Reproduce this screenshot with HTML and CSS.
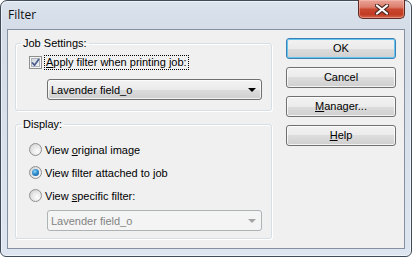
FILE: index.html
```html
<!DOCTYPE html>
<html>
<head>
<meta charset="utf-8">
<link rel="stylesheet" href="styles.css">
</head>
<body>
<div class="window">
  <div class="titlebar">
    <span class="title">Filter</span>
    <div class="close">
      <svg width="14" height="11" viewBox="0 0 14 11">
        <path d="M2 1.5 L12 9.5 M12 1.5 L2 9.5" stroke="#4a2a24" stroke-width="4.2" stroke-linecap="round" fill="none"/>
        <path d="M2 1.5 L12 9.5 M12 1.5 L2 9.5" stroke="#ffffff" stroke-width="2.2" stroke-linecap="round" fill="none"/>
      </svg>
    </div>
  </div>
  <div class="client">
    <div class="groups">
      <fieldset class="group job">
        <legend>Job Settings:</legend>
        <div class="check-row">
          <span class="checkbox">
            <svg width="9" height="9" viewBox="0 0 9 9"><path d="M1 4.5 L3.5 7.2 L8 1" stroke="#4b5f8f" stroke-width="1.8" fill="none"/></svg>
          </span>
          <span class="focus"><u>A</u>pply filter when printing job:</span>
        </div>
        <div class="combo">
          <span class="combo-text">Lavender field_o</span>
          <span class="arrow"></span>
        </div>
      </fieldset>
      <fieldset class="group display">
        <legend>Display:</legend>
        <div class="radio-row"><span class="radio"></span><span>View <u>o</u>riginal image</span></div>
        <div class="radio-row"><span class="radio checked"></span><span>View filter attached to <u>j</u>ob</span></div>
        <div class="radio-row"><span class="radio"></span><span>View <u>s</u>pecific filter:</span></div>
        <div class="combo disabled">
          <span class="combo-text">Lavender field_o</span>
          <span class="arrow"></span>
        </div>
      </fieldset>
    </div>
    <div class="buttons">
      <div class="btn default">OK</div>
      <div class="btn">Cancel</div>
      <div class="btn"><u>M</u>anager...</div>
      <div class="btn"><u>H</u>elp</div>
    </div>
  </div>
</div>
</body>
</html>
```
FILE: styles.css
```css
* { box-sizing: border-box; }
html, body { margin: 0; padding: 0; }
body {
  width: 412px;
  height: 257px;
  overflow: hidden;
  background: #ffffff;
  font-family: "Liberation Sans", Arial, sans-serif;
  font-size: 11px;
  color: #000;
}
.window {
  width: 412px;
  height: 257px;
  border: 1px solid #3f4b59;
  border-radius: 7px 7px 6px 6px;
  background: linear-gradient(180deg, #dbe3ed 0%, #d3dce7 12%, #d8e1ec 60%, #dde6f0 100%);
  box-shadow: inset 0 0 0 1px rgba(255,255,255,0.55);
  display: flex;
  flex-direction: column;
  padding: 0 6px 7px 6px;
}
.titlebar {
  height: 28px;
  display: flex;
  justify-content: space-between;
  align-items: flex-start;
  flex: none;
}
.title {
  font-family: "Open Sans", "Noto Sans", sans-serif;
  font-size: 12px;
  line-height: 16px;
  padding: 6px 0 0 1px;
  color: #111;
}
.close {
  width: 47px;
  height: 19px;
  margin-top: -1px;
  border: 1px solid #5e2a22;
  border-top: none;
  border-radius: 0 0 5px 5px;
  background: linear-gradient(180deg, #e9a699 0%, #dc7d6c 40%, #c9472f 52%, #c23a22 80%, #d2654c 100%);
  box-shadow: inset 0 0 0 1px rgba(255,200,190,0.45);
  display: flex;
  align-items: center;
  justify-content: center;
  padding-top: 1px;
}
.client {
  flex: 1;
  border: 1px solid #8591a0;
  background: #f0f0f0;
  display: flex;
  padding: 7px 8px 0 7px;
  gap: 14px;
}
.groups {
  width: 257px;
  display: flex;
  flex-direction: column;
  gap: 7px;
}
.group {
  margin: 0;
  min-width: 0;
  border: 1px solid #d5dfe5;
  border-radius: 3px;
  box-shadow: 1px 1px 0 #ffffff, inset 1px 1px 0 #ffffff;
}
.group legend {
  padding: 0 2px;
  margin-left: -8px;
  line-height: 13px;
  height: 13px;
}
.job { padding: 5px 9px 10px 13px; }
.display { padding: 11px 9px 7px 13px; }
.check-row {
  display: flex;
  align-items: center;
  height: 15px;
}
.checkbox {
  width: 13px;
  height: 13px;
  border: 1px solid #8f8f8f;
  background: #f4f4f4;
  display: flex;
  align-items: center;
  justify-content: center;
  flex: none;
  box-shadow: inset 0 0 0 1px #f4f4f4, inset 0 0 0 2px #aeb3b9;
  background-image: linear-gradient(135deg, #c9ced6 0%, #e8eaed 60%, #f6f6f6 100%);
}
.focus {
  margin-left: 2px;
  padding: 0 2px 0 2px;
  outline: 1px dotted #000;
  outline-offset: -1px;
  line-height: 15px;
  height: 15px;
}
.combo {
  margin: 9px 0 0 18px;
  width: 215px;
  height: 21px;
  border: 1px solid #707070;
  border-radius: 3px;
  background: linear-gradient(180deg, #f2f2f2 0%, #ebebeb 50%, #dddddd 50%, #cfcfcf 100%);
  box-shadow: inset 0 0 0 1px rgba(255,255,255,0.7);
  display: flex;
  align-items: center;
  justify-content: space-between;
  padding: 0 5px 0 3px;
}
.arrow {
  width: 0;
  height: 0;
  border-left: 4px solid transparent;
  border-right: 4px solid transparent;
  border-top: 4px solid #000;
  margin-top: 1px;
}
.combo.disabled {
  margin-top: 7px;
  border-color: #adb2b5;
  background: #f4f4f4;
  box-shadow: none;
  color: #838383;
}
.combo.disabled .arrow { border-top-color: #a3a3a3; }
.radio-row {
  display: flex;
  align-items: center;
  height: 15px;
  gap: 3px;
  margin-bottom: 8px;
}
.radio-row:nth-of-type(3) { margin-bottom: 0; }
.radio {
  width: 13px;
  height: 13px;
  border-radius: 50%;
  border: 1px solid #8f8f8f;
  background: radial-gradient(circle at 65% 65%, #fdfdfd 0%, #e6e6e6 50%, #c8c8c8 100%);
  flex: none;
  display: flex;
  align-items: center;
  justify-content: center;
}
.radio.checked::after {
  content: "";
  width: 7px;
  height: 7px;
  border-radius: 50%;
  background: radial-gradient(circle at 40% 35%, #8fd3f7 0%, #2f8ccb 45%, #0d4f8a 100%);
}
.buttons {
  margin-top: 1px;
  width: 110px;
  display: flex;
  flex-direction: column;
  gap: 8px;
}
.btn {
  height: 21px;
  border: 1px solid #707070;
  border-radius: 3px;
  background: linear-gradient(180deg, #f2f2f2 0%, #ebebeb 50%, #dddddd 50%, #cfcfcf 100%);
  box-shadow: inset 0 0 0 1px rgba(255,255,255,0.75);
  display: flex;
  align-items: center;
  justify-content: center;
  line-height: 13px;
}
.btn.default {
  border-color: #3c7fb1;
  box-shadow: inset 0 0 0 1px #66c6f2;
}
```
